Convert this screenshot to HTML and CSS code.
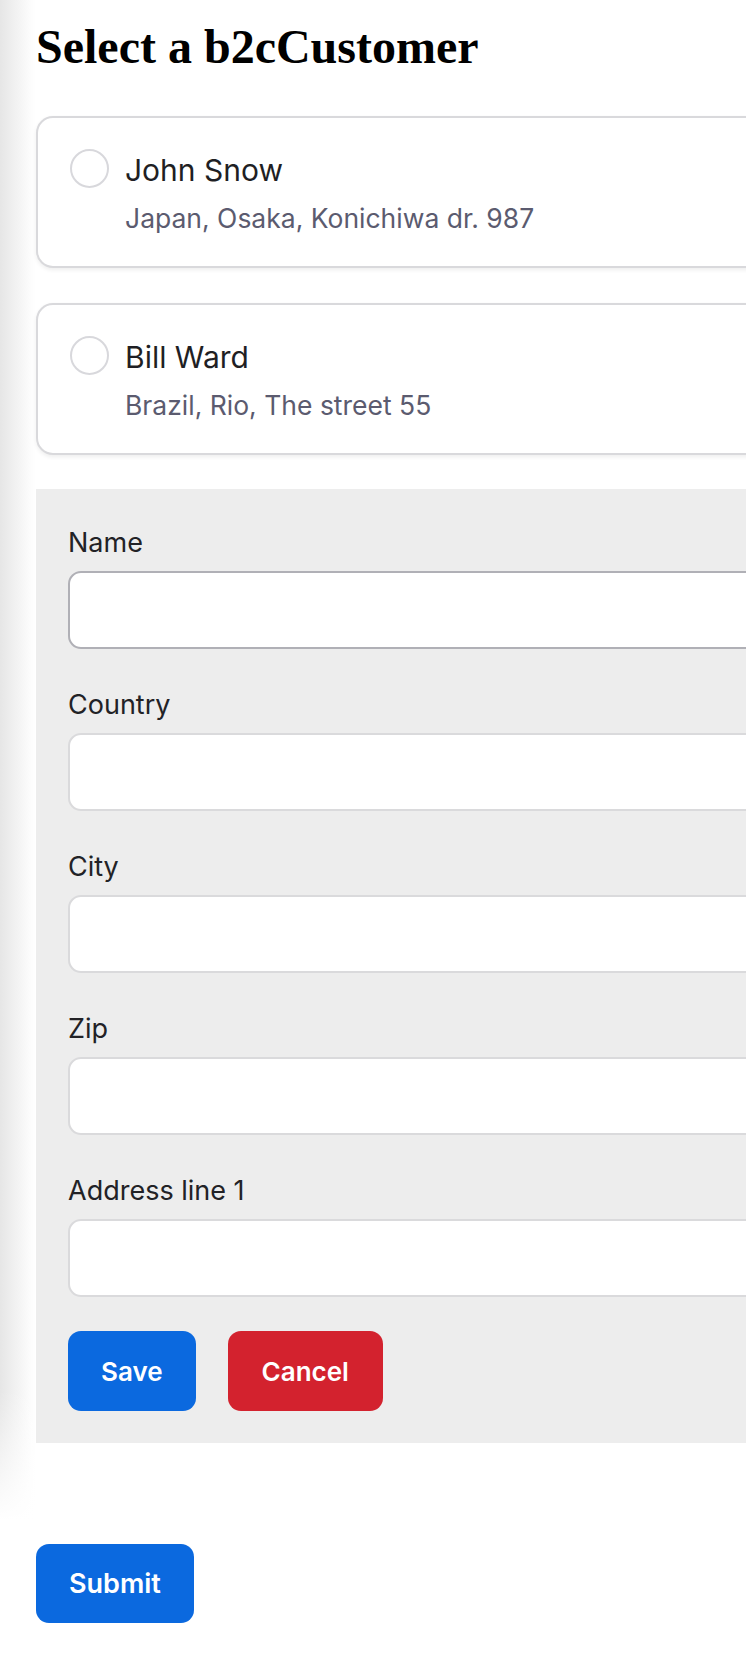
FILE: index.html
```html
<!DOCTYPE html>
<html lang="en">
<head>
<meta charset="utf-8">
<title>Select a b2cCustomer</title>
<link rel="stylesheet" href="styles.css">
</head>
<body>
<main class="page">
  <h1 class="title">Select a b2cCustomer</h1>

  <div class="customers">
    <label class="card">
      <span class="radio"></span>
      <span class="card-text">
        <span class="card-name">John Snow</span>
        <span class="card-address">Japan, Osaka, Konichiwa dr. 987</span>
      </span>
    </label>
    <label class="card">
      <span class="radio"></span>
      <span class="card-text">
        <span class="card-name">Bill Ward</span>
        <span class="card-address">Brazil, Rio, The street 55</span>
      </span>
    </label>
  </div>

  <form class="panel">
    <div class="field">
      <label class="field-label">Name</label>
      <div class="input input-active"></div>
    </div>
    <div class="field">
      <label class="field-label">Country</label>
      <div class="input"></div>
    </div>
    <div class="field">
      <label class="field-label">City</label>
      <div class="input"></div>
    </div>
    <div class="field">
      <label class="field-label">Zip</label>
      <div class="input"></div>
    </div>
    <div class="field">
      <label class="field-label">Address line 1</label>
      <div class="input"></div>
    </div>
    <div class="actions">
      <button type="button" class="btn btn-blue">Save</button>
      <button type="button" class="btn btn-red">Cancel</button>
    </div>
  </form>

  <div class="submit-row">
    <button type="button" class="btn btn-blue btn-submit">Submit</button>
  </div>
</main>
</body>
</html>
```

FILE: styles.css
```css
html {
  overflow: hidden;
  background-color: #ffffff;
  background-image:
    linear-gradient(to bottom, rgba(255,255,255,0) 0, #ffffff 100%),
    linear-gradient(to right, #e6e6e6 0, #f3f3f3 18px, #fcfcfc 30px, #ffffff 36px);
  background-size: 36px 130px, 36px 1520px;
  background-position: 0 1390px, 0 0;
  background-repeat: no-repeat;
}

body {
  margin: 0;
  font-family: Inter, "Noto Sans", sans-serif;
  color: #222226;
}

.page {
  width: 860px;
  padding: 19px 0 0 36px;
}

.title {
  margin: 0;
  font-family: "Liberation Serif", "Times New Roman", serif;
  font-weight: 700;
  font-size: 48px;
  line-height: 55px;
  color: #000;
}

.customers {
  display: flex;
  flex-direction: column;
  gap: 35px;
  margin-top: 42px;
}

.card {
  display: flex;
  align-items: flex-start;
  gap: 16px;
  background: #fff;
  border: 2px solid #d9d9dc;
  border-radius: 17px;
  box-shadow: 0 2px 4px rgba(0, 0, 0, 0.07);
  padding: 34px 32px 30px 32px;
}

.radio {
  flex: 0 0 auto;
  width: 39px;
  height: 39px;
  box-sizing: border-box;
  border: 2px solid #d8d8dc;
  border-radius: 50%;
  background: #fff;
  margin-top: -3px;
}

.card-text {
  display: flex;
  flex-direction: column;
  gap: 12px;
}

.card-name {
  font-size: 30px;
  line-height: 36px;
  color: #1f1f24;
}

.card-address {
  font-size: 26.5px;
  line-height: 36px;
  color: #5b5b6f;
}

.panel {
  margin-top: 34px;
  background: #ededed;
  padding: 36px 32px 32px 32px;
  display: flex;
  flex-direction: column;
  gap: 38px;
}

.field {
  display: flex;
  flex-direction: column;
  gap: 10px;
}

.field-label {
  font-size: 27px;
  line-height: 36px;
  color: #222226;
}

.input {
  height: 78px;
  box-sizing: border-box;
  background: #fff;
  border: 2px solid #dadadc;
  border-radius: 13px;
}

.input-active {
  border-color: #b0b0b6;
}

.actions {
  display: flex;
  gap: 32px;
  margin-top: -4px;
}

.btn {
  height: 80px;
  border: none;
  border-radius: 13px;
  padding: 0 33px;
  font-family: Inter, "Noto Sans", sans-serif;
  font-weight: 600;
  font-size: 26px;
  color: #fff;
  cursor: pointer;
}

.btn-blue {
  background: #0b69df;
}

.btn-red {
  background: #d3222e;
  padding: 0 34px;
}

.submit-row {
  display: flex;
  margin-top: 101px;
}

.btn-submit {
  height: 79px;
  padding: 0 33px;
  font-size: 27px;
}
```
